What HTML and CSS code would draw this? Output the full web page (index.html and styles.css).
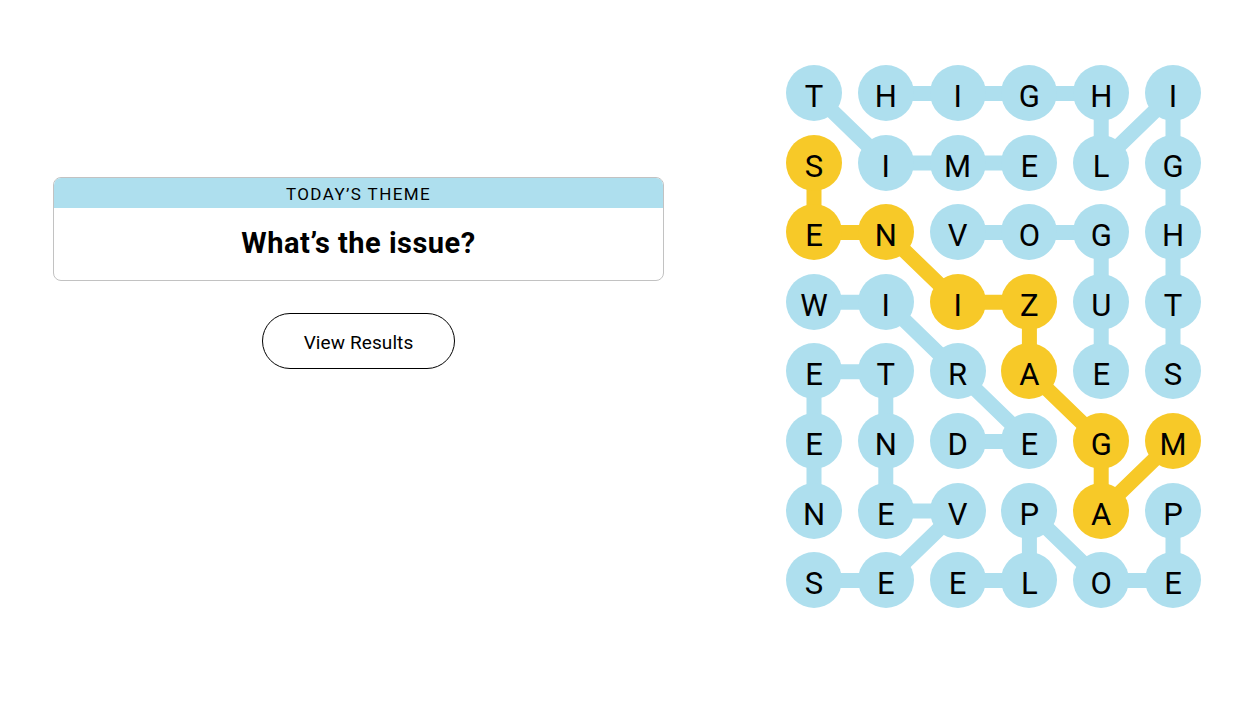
FILE: index.html
```html
<!DOCTYPE html>
<html lang="en">
<head>
<meta charset="utf-8">
<title>Strands</title>
<link rel="stylesheet" href="styles.css">
</head>
<body>
<main class="page">
  <section class="side">
    <div class="theme-card">
      <div class="theme-head">Today’s Theme</div>
      <div class="theme-body">What’s the issue?</div>
    </div>
    <button class="results-btn" type="button">View Results</button>
  </section>
  <section class="board">
    <svg class="links" width="415" height="544" viewBox="0 0 415 543.2" aria-hidden="true">
      <g class="blue">
        <polyline points="28,28 99.8,97.6 171.6,97.6 243.4,97.6"/>
        <polyline points="99.8,28 171.6,28 243.4,28 315.2,28 315.2,97.6 387,28 387,97.6 387,167.2 387,236.8 387,306.4"/>
        <polyline points="171.6,167.2 243.4,167.2 315.2,167.2 315.2,236.8 315.2,306.4"/>
        <polyline points="28,236.8 99.8,236.8 171.6,306.4 243.4,376 171.6,376"/>
        <polyline points="28,515.2 99.8,515.2 171.6,445.6 99.8,445.6 99.8,376 99.8,306.4 28,306.4 28,376 28,445.6"/>
        <polyline points="387,445.6 387,515.2 315.2,515.2 243.4,445.6 243.4,515.2 171.6,515.2"/>
      </g>
      <g class="gold">
        <polyline points="28,97.6 28,167.2 99.8,167.2 171.6,236.8 243.4,236.8 243.4,306.4 315.2,376 315.2,445.6 387,376"/>
      </g>
    </svg>
    <div class="grid">
      <span class="cell">T</span><span class="cell">H</span><span class="cell">I</span><span class="cell">G</span><span class="cell">H</span><span class="cell">I</span>
      <span class="cell gold-cell">S</span><span class="cell">I</span><span class="cell">M</span><span class="cell">E</span><span class="cell">L</span><span class="cell">G</span>
      <span class="cell gold-cell">E</span><span class="cell gold-cell">N</span><span class="cell">V</span><span class="cell">O</span><span class="cell">G</span><span class="cell">H</span>
      <span class="cell">W</span><span class="cell">I</span><span class="cell gold-cell">I</span><span class="cell gold-cell">Z</span><span class="cell">U</span><span class="cell">T</span>
      <span class="cell">E</span><span class="cell">T</span><span class="cell">R</span><span class="cell gold-cell">A</span><span class="cell">E</span><span class="cell">S</span>
      <span class="cell">E</span><span class="cell">N</span><span class="cell">D</span><span class="cell">E</span><span class="cell gold-cell">G</span><span class="cell gold-cell">M</span>
      <span class="cell">N</span><span class="cell">E</span><span class="cell">V</span><span class="cell">P</span><span class="cell gold-cell">A</span><span class="cell">P</span>
      <span class="cell">S</span><span class="cell">E</span><span class="cell">E</span><span class="cell">L</span><span class="cell">O</span><span class="cell">E</span>
    </div>
  </section>
</main>
</body>
</html>
```

FILE: styles.css
```css
* { box-sizing: border-box; }
html, body { margin: 0; padding: 0; background: #fff; }
body {
  font-family: Roboto, "Liberation Sans", Arial, sans-serif;
  color: #000;
  width: 1250px;
  height: 706px;
  overflow: hidden;
}
.page {
  display: flex;
  align-items: flex-start;
  padding: 65px 0 0 53px;
  gap: 122px;
}
.side {
  width: 611px;
  margin-top: 112px;
  display: flex;
  flex-direction: column;
  align-items: center;
}
.theme-card {
  width: 100%;
  border: 1px solid #c2c2c2;
  border-radius: 8px;
  overflow: hidden;
}
.theme-head {
  background: #aedfee;
  height: 30px;
  display: flex;
  align-items: center;
  justify-content: center;
  text-transform: uppercase;
  font-size: 17px;
  letter-spacing: 1.4px;
  padding-top: 1px;
}
.theme-body {
  height: 72px;
  display: flex;
  align-items: center;
  justify-content: center;
  font-weight: 700;
  font-size: 29px;
  letter-spacing: 0.5px;
  padding-bottom: 2px;
}
.results-btn {
  margin-top: 32px;
  width: 193px;
  height: 56px;
  border: 1px solid #000;
  border-radius: 28px;
  background: #fff;
  font-family: Roboto, "Liberation Sans", Arial, sans-serif;
  font-size: 19px;
  color: #000;
  letter-spacing: 0.1px;
  padding: 3px 0 0;
}
.board {
  position: relative;
  width: 415px;
  height: 544px;
}
.links {
  position: absolute;
  left: 0;
  top: 0;
}
.links polyline {
  fill: none;
  stroke-width: 15;
  stroke-linejoin: round;
}
.blue polyline { stroke: #aedfee; }
.gold polyline { stroke: #f7c928; }
.grid {
  position: relative;
  display: grid;
  grid-template-columns: repeat(6, 56px);
  grid-auto-rows: 56px;
  column-gap: 15.8px;
  row-gap: 13.6px;
}
.cell {
  width: 56px;
  height: 56px;
  border-radius: 50%;
  background: #aedfee;
  display: flex;
  align-items: center;
  justify-content: center;
  font-size: 31px;
  line-height: 1;
  padding-top: 7px;
}
.gold-cell { background: #f7c928; }
```
